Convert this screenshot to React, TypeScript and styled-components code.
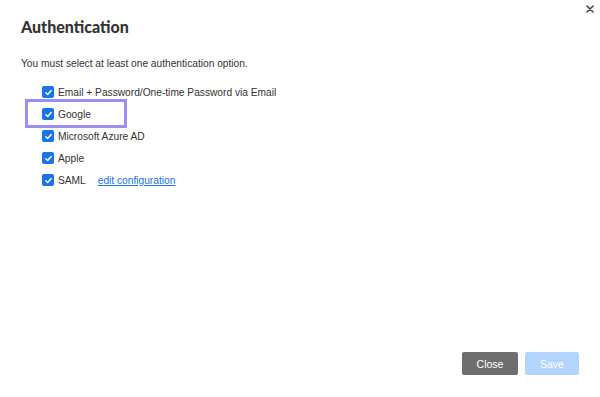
import React from "react";
import styled, { createGlobalStyle } from "styled-components";

const GlobalStyle = createGlobalStyle`
  html, body {
    margin: 0;
    padding: 0;
    background: #ffffff;
  }
  body {
    font-family: "Helvetica Neue", "Liberation Sans", Arial, sans-serif;
    color: #333333;
  }
`;

const Modal = styled.div`
  position: relative;
  width: 600px;
  height: 397px;
  box-sizing: border-box;
  padding: 17px 21px 22px 21px;
  display: flex;
  flex-direction: column;
  background: #ffffff;
`;

const CloseIcon = styled.button`
  position: absolute;
  top: 3px;
  right: 4px;
  width: 12px;
  height: 12px;
  padding: 0;
  border: none;
  background: transparent;
  display: flex;
  align-items: center;
  justify-content: center;
  cursor: pointer;
`;

const Title = styled.h2`
  margin: 0;
  font-family: "Lato", "Inter", sans-serif;
  font-weight: 900;
  font-size: 16px;
  line-height: 20px;
  color: #333333;
  letter-spacing: 0;
`;

const Hint = styled.p`
  margin: 20px 0 10px 0;
  font-size: 10.2px;
  line-height: 14px;
  color: #333333;
`;

const OptionList = styled.div`
  display: flex;
  flex-direction: column;
  padding-left: 21px;
`;

const OptionRow = styled.label<{ $highlight?: boolean }>`
  position: relative;
  display: flex;
  align-items: center;
  gap: 4px;
  height: 22px;
  width: fit-content;
  font-size: 10.2px;
  color: #333333;

  ${({ $highlight }) =>
    $highlight
      ? `
    &::after {
      content: "";
      position: absolute;
      left: -17px;
      top: -4px;
      width: 102px;
      height: 29px;
      box-sizing: border-box;
      border: 3px solid #9d8ff2;
      pointer-events: none;
    }
  `
      : ""}
`;

const Box = styled.span`
  width: 12px;
  height: 12px;
  border-radius: 2px;
  background: #1a73e8;
  display: inline-flex;
  align-items: center;
  justify-content: center;
  flex: none;
`;

const EditLink = styled.a`
  margin-left: 8px;
  color: #1a73e8;
  text-decoration: underline;
  font-size: 10.2px;
  cursor: pointer;
`;

const Spacer = styled.div`
  flex: 1;
`;

const Footer = styled.div`
  display: flex;
  justify-content: flex-end;
  gap: 7px;
`;

const Button = styled.button<{ $variant: "close" | "save" }>`
  height: 23px;
  border: none;
  border-radius: 2px;
  font-family: "Helvetica Neue", "Liberation Sans", Arial, sans-serif;
  font-size: 10.5px;
  padding: 0;
  cursor: pointer;
  ${({ $variant }) =>
    $variant === "close"
      ? `
    width: 56px;
    background: #6e6e6e;
    color: #ffffff;
  `
      : `
    width: 54px;
    background: #b3d4fc;
    color: #ffffff;
  `}
`;

const Check = () => (
  <Box>
    <svg width="9" height="9" viewBox="0 0 10 10">
      <path
        d="M2 5.2 L4.1 7.2 L8 2.8"
        fill="none"
        stroke="#ffffff"
        strokeWidth="1.6"
        strokeLinecap="round"
        strokeLinejoin="round"
      />
    </svg>
  </Box>
);

const options = [
  { label: "Email + Password/One-time Password via Email" },
  { label: "Google", highlight: true },
  { label: "Microsoft Azure AD" },
  { label: "Apple" },
  { label: "SAML", link: "edit configuration" },
];

export default function App() {
  return (
    <>
      <GlobalStyle />
      <Modal>
        <CloseIcon aria-label="Close">
          <svg width="8" height="8" viewBox="0 0 8 8">
            <path
              d="M1 1 L7 7 M7 1 L1 7"
              stroke="#444444"
              strokeWidth="1.6"
              strokeLinecap="round"
            />
          </svg>
        </CloseIcon>
        <Title>Authentication</Title>
        <Hint>You must select at least one authentication option.</Hint>
        <OptionList>
          {options.map((o) => (
            <OptionRow key={o.label} $highlight={o.highlight}>
              <Check />
              <span>{o.label}</span>
              {o.link && <EditLink>{o.link}</EditLink>}
            </OptionRow>
          ))}
        </OptionList>
        <Spacer />
        <Footer>
          <Button $variant="close">Close</Button>
          <Button $variant="save">Save</Button>
        </Footer>
      </Modal>
    </>
  );
}
